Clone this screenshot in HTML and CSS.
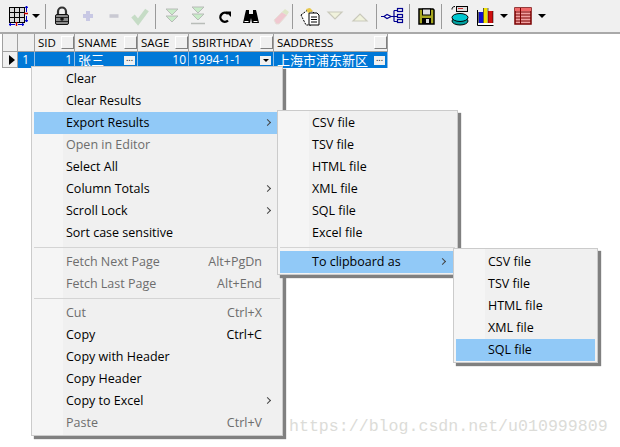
FILE: index.html
```html
<!DOCTYPE html>
<html lang="zh">
<head>
<meta charset="utf-8">
<title>Results grid</title>
<link rel="stylesheet" href="styles.css">
</head>
<body>
<div class="toolbar">
  <svg class="ic gridicon" viewBox="0 0 20 20"><g fill="#d8d8d8" stroke="#000" stroke-width="1"><rect x="1.500" y="1.500" width="5" height="5"/><rect x="6.500" y="1.500" width="5" height="5"/><rect x="11.500" y="1.500" width="5" height="5"/><rect x="1.500" y="6.500" width="5" height="5"/><rect x="6.500" y="6.500" width="5" height="5"/><rect x="11.500" y="6.500" width="5" height="5"/><rect x="1.500" y="11.500" width="5" height="5"/><rect x="6.500" y="11.500" width="5" height="5"/><rect x="11.500" y="11.500" width="5" height="5"/></g><path d="M18.500 0v6M18.500 10v6M17 2l1.500-2L20 2M17 14l1.500 2 1.500-2M1 18.500h6M10 18.500h6M3 17l-2 1.500L3 20M14 17l2 1.500L14 20" fill="none" stroke="#00c" stroke-width="1"/><path d="M16 7.500h4M8.500 16v4" stroke="#c00" stroke-width="1.400"/></svg>
  <i class="drop d1"></i>
  <i class="sep s1"></i>
  <svg class="ic lock" viewBox="0 0 18 22"><path d="M5 10V6.500a4 4 0 0 1 8 0V10" fill="none" stroke="#333" stroke-width="2.200"/><rect x="2.500" y="9.500" width="13" height="10" rx="1.500" fill="#8a8a8a" stroke="#111"/><path d="M3 12.500h12M3 16.500h12" stroke="#222"/><circle cx="9" cy="14" r="1.800" fill="#111"/></svg>
  <svg class="ic btn" viewBox="0 0 24 22"><path d="M12 6v10M7 11h10" stroke="#c8c8e4" stroke-width="4"/></svg>
  <svg class="ic btn" viewBox="0 0 24 22"><path d="M7.500 11h9" stroke="#c9c9d2" stroke-width="3.500"/></svg>
  <svg class="ic btn" viewBox="0 0 24 22"><path d="M5 11l5 6L19 5" fill="none" stroke="#c6dcc6" stroke-width="4.500"/></svg>
  <i class="sep s2"></i>
  <svg class="ic btn" viewBox="0 0 24 22"><path d="M6 4h12l-6 6zM6 11h12l-6 6z" fill="#c8ecc8" stroke="#b8bcb8"/></svg>
  <svg class="ic btn ddb" viewBox="0 0 24 22"><path d="M6 2h12l-6 6zM6 9h12l-6 6z" fill="#c8ecc8" stroke="#b8bcb8"/><path d="M5 18.500h14" stroke="#b8bcb8" stroke-width="1.500"/></svg>
  <svg class="ic btn" viewBox="0 0 24 22"><path d="M15 15.500a4.500 4.500 0 1 1 0-6.500" fill="none" stroke="#000" stroke-width="2.400"/><path d="M12.500 6.500h5.500v5.500z" fill="#000"/></svg>
  <svg class="ic btn" viewBox="0 0 24 22"><path d="M7 5h3v4h4V5h3l1 4 2 9h-7l-1-5h-0l-1 5H4l2-9z" fill="#000"/><path d="M5.500 16.500h4M14.500 16.500h4" stroke="#fff"/></svg>
  <svg class="ic btn eraser" viewBox="0 0 24 22"><path d="M6 15l8-8 5 3-8 9H8z" fill="#f0c8d0" stroke="#e6e0d8"/><path d="M14 7l3-3 4 3-2 3z" fill="#dfe6c8"/></svg>
  <i class="sep s3"></i>
  <svg class="ic btn doc" viewBox="0 0 24 22"><path d="M3 10l8-6 5 4-4 3 1 9H8z" fill="#fff" stroke="#000" stroke-dasharray="2 1"/><path d="M8 4l4-1 3 3-5 2z" fill="#e8c84a"/><path d="M11 8h8l2 2v10H11z" fill="#fff" stroke="#000"/><path d="M13 12h6M13 14.500h6M13 17h6" stroke="#000"/></svg>
  <svg class="ic btn tri1" viewBox="0 0 24 22"><path d="M5 7h14l-7 7z" fill="#f0f2dc" stroke="#c9c9bb" stroke-width="1.200"/></svg>
  <svg class="ic btn tri1" viewBox="0 0 24 22"><path d="M5 16h14l-7-7z" fill="#f0f2dc" stroke="#c9c9bb" stroke-width="1.200"/></svg>
  <i class="sep s4"></i>
  <svg class="ic btn tree" viewBox="0 0 24 22"><g fill="none" stroke="#000090" stroke-width="1.200"><path d="M1 11.500h6M11 11.500h3M14 5.500v11M14 5.500h3M14 11.500h3M14 16.500h3"/><path d="M7 9.500l-3 2 3 2 4-2z" fill="#fff"/><rect x="17.500" y="3.500" width="5" height="3"/><rect x="17.500" y="9.500" width="5" height="3"/><rect x="17.500" y="14.500" width="5" height="3"/></g></svg>
  <i class="sep s5"></i>
  <svg class="ic btn floppy" viewBox="0 0 24 22"><path d="M5 4h14l1 1v14H5z" fill="#a8a820" stroke="#000" stroke-width="1.500"/><rect x="8.500" y="4" width="8" height="6" fill="#ddd" stroke="#000"/><rect x="8" y="13" width="9" height="6" fill="#000"/><rect x="12" y="14" width="3" height="4" fill="#ddd"/></svg>
  <i class="sep s6"></i>
  <svg class="ic btn db" viewBox="0 0 24 22"><path d="M4 4.500c0-2 1-3 3-3" fill="none" stroke="#000"/><rect x="8.500" y="1.500" width="11" height="5" fill="#ddd" stroke="#000"/><rect x="10" y="3" width="5" height="1" fill="#c33"/><ellipse cx="12" cy="16" rx="8" ry="4" fill="#00a0a0" stroke="#000"/><ellipse cx="12" cy="12.500" rx="8" ry="4" fill="#00c8d0" stroke="#000"/></svg>
  <svg class="ic btn chart" viewBox="0 0 24 22"><rect x="4" y="7" width="17" height="13" fill="#fff"/><path d="M4.500 5v15.500h16" fill="none" stroke="#000"/><rect x="6" y="7" width="4" height="11" fill="#1010d0"/><rect x="10.500" y="3" width="4" height="15" fill="#f0e000"/><rect x="15" y="6" width="5" height="12" fill="#d01010"/><path d="M5.500 7v11M10.500 3v15M15 3v15M20 6v12" stroke="#000" stroke-width=".6"/></svg>
  <i class="drop d2"></i>
  <svg class="ic table" viewBox="0 0 18 18"><rect x="1" y="1" width="16" height="16" fill="#f0a0a0" stroke="#7a0000" stroke-width="1.500"/><path d="M1 1h16v3H1z" fill="#f06868"/><path d="M1 5h16M1 8h16M1 11h16M1 14h16M6.500 1v16" stroke="#7a0000" stroke-width="1"/></svg>
  <i class="drop d3"></i>
</div>

<div class="grid">
  <div class="hcell ind"></div><div class="hcell ind"></div>
  <div class="hcell"><span>SID</span><b class="hbtn"></b></div>
  <div class="hcell"><span>SNAME</span><b class="hbtn"></b></div>
  <div class="hcell"><span>SAGE</span><b class="hbtn"></b></div>
  <div class="hcell"><span>SBIRTHDAY</span><b class="hbtn"></b></div>
  <div class="hcell"><span>SADDRESS</span><b class="hbtn"></b></div>

  <div class="cell arrow"><i class="tri"></i></div>
  <div class="cell right num">1</div>
  <div class="cell right">1</div>
  <div class="cell"><span class="cjk">张三</span><b class="dots">...</b></div>
  <div class="cell right">10</div>
  <div class="cell"><span>1994-1-1</span><b class="dots pick"><i></i></b></div>
  <div class="cell"><span class="cjk">上海市浦东新区</span><b class="dots">...</b></div>
</div>

<div class="watermark">https://blog.csdn.net/u010999809</div>

<div class="menu m1">
  <div class="item">Clear</div>
  <div class="item">Clear Results</div>
  <div class="item on sub">Export Results</div>
  <div class="item off">Open in Editor</div>
  <div class="item">Select All</div>
  <div class="item sub">Column Totals</div>
  <div class="item sub">Scroll Lock</div>
  <div class="item">Sort case sensitive</div>
  <hr class="rule">
  <div class="item off">Fetch Next Page<kbd>Alt+PgDn</kbd></div>
  <div class="item off">Fetch Last Page<kbd>Alt+End</kbd></div>
  <hr class="rule">
  <div class="item off">Cut<kbd>Ctrl+X</kbd></div>
  <div class="item">Copy<kbd>Ctrl+C</kbd></div>
  <div class="item">Copy with Header</div>
  <div class="item">Copy Header</div>
  <div class="item sub">Copy to Excel</div>
  <div class="item off">Paste<kbd>Ctrl+V</kbd></div>
</div>

<div class="menu m2">
  <div class="item">CSV file</div>
  <div class="item">TSV file</div>
  <div class="item">HTML file</div>
  <div class="item">XML file</div>
  <div class="item">SQL file</div>
  <div class="item">Excel file</div>
  <hr class="rule">
  <div class="item on sub">To clipboard as</div>
</div>

<div class="menu m3">
  <div class="item">CSV file</div>
  <div class="item">TSV file</div>
  <div class="item">HTML file</div>
  <div class="item">XML file</div>
  <div class="item on">SQL file</div>
</div>
</body>
</html>
```
FILE: styles.css
```css
html, body {
  margin: 0;
  padding: 0;
  background: #fff;
  width: 620px;
  height: 447px;
  overflow: hidden;
  font-family: "Open Sans", "Noto Sans CJK SC", sans-serif;
}

/* toolbar */
.toolbar {
  display: flex;
  align-items: center;
  height: 34px;
  box-sizing: border-box;
  background: #f0f0f0;
  border-bottom: 2px solid #a9a9a9;
  padding: 0 0 0 8px;
}
.ic { display: block; flex: none; }
.gridicon { width: 20px; height: 20px; }
.btn { width: 24px; height: 22px; margin-right: 2px; }
.lock { width: 18px; height: 22px; margin: 0 5px 0 7px; }
.table { width: 18px; height: 18px; margin-left: 6px; }
.sep { display: block; flex: none; width: 1px; height: 25px; background: #9a9a9a; }
.drop {
  display: block;
  flex: none;
  width: 0;
  height: 0;
  border-left: 4px solid transparent;
  border-right: 4px solid transparent;
  border-top: 4px solid #000;
}
.d1 { margin-left: 4px; }
.d2 { margin-left: 1px; }
.d3 { margin-left: 6px; }
.s1 { margin-left: 5px; }
.s2 { margin: 0 4px 0 1px; }
.s3 { margin-left: -2px; }
.s4 { margin: 0 3px 0 2px; }
.s5 { margin: 0 4px 0 3px; }
.s6 { margin: 0 6px 0 1px; }
.ddb { margin-right: 3px; }
.eraser { margin-left: 3px; }
.doc { margin-left: 5px; }
.tri1 { margin-left: -1px; }
.chart { margin-left: -1px; }

/* grid */
.grid {
  display: grid;
  width: 386px;
  margin: 0 0 0 2px;
  border-left: 1px solid #a0a0a0;
  grid-template-columns: 15px 17px 40px 63px 51px 85px 114px;
  grid-template-rows: 18px 16px;
  font-size: 11.5px;
  color: #000;
}
.hcell {
  display: flex;
  align-items: center;
  justify-content: space-between;
  box-sizing: border-box;
  background: #f0f0f0;
  border-right: 1px solid #a0a0a0;
  border-bottom: 1px solid #a0a0a0;
  padding-left: 3px;
  line-height: 17px;
}
.hbtn {
  display: block;
  width: 13px;
  height: 13px;
  background: #f0f0f0;
  border-right: 1px solid #808080;
  border-bottom: 1px solid #808080;
  border-top: 1px solid #fff;
  border-left: 1px solid #fff;
  box-sizing: border-box;
}
.cell {
  display: flex;
  align-items: center;
  justify-content: space-between;
  box-sizing: border-box;
  background: #0078d7;
  color: #fff;
  border-right: 1px solid #8fbde6;
  padding: 0 2px 0 3px;
  font-size: 12px;
  line-height: 16px;
  overflow: hidden;
}
.cjk { font-size: 13px; }
.right { justify-content: flex-end; }
.arrow { background: #f0f0f0; padding: 0 0 0 6px; border-right: 1px solid #a0a0a0; border-bottom: 1px solid #a0a0a0; }
.num { padding-right: 5px; }
.tri {
  display: block;
  border-top: 5px solid transparent;
  border-bottom: 5px solid transparent;
  border-left: 6px solid #000;
}
.dots {
  display: flex;
  flex: none;
  justify-content: center;
  width: 11px;
  height: 9px;
  background: #f0f0f0;
  color: #000;
  font-size: 9px;
  font-weight: 400;
  line-height: 4px;
}
.pick { align-items: center; }
.pick i {
  display: block;
  border-left: 3px solid transparent;
  border-right: 3px solid transparent;
  border-top: 3px solid #000;
}

/* popup menus */
.menu {
  position: absolute;
  box-sizing: border-box;
  padding: 1px 2px;
  background: linear-gradient(90deg, #f5f5f5 31px, #f0f0f0 31px);
  border: 1px solid #cbcbcb;
  box-shadow: 3px 3px 1px #808080;
  font-size: 12.5px;
  color: #000;
}
.m1 { left: 31px; top: 66px; width: 252px; z-index: 1; }
.m2 { left: 277px; top: 110px; width: 181px; z-index: 2; }
.m3 { left: 453px; top: 248px; width: 145px; padding-top: 2px; z-index: 3; }
.item {
  position: relative;
  display: flex;
  justify-content: space-between;
  align-items: center;
  height: 22px;
  line-height: 22px;
  padding: 0 18px 0 32px;
  white-space: nowrap;
}
.on { background: #91c9f7; }
.off { color: #6d6d6d; }
kbd { font: inherit; }
.sub::after {
  content: "";
  position: absolute;
  right: 10px;
  top: 8px;
  width: 4px;
  height: 4px;
  border-top: 1px solid #444;
  border-right: 1px solid #444;
  transform: rotate(45deg);
}
.rule {
  height: 1px;
  margin: 3px 0;
  border: 0;
  background: #d4d4d4;
}

.watermark {
  position: absolute;
  left: 289px;
  top: 417px;
  font-family: "Liberation Mono", monospace;
  font-size: 16.6px;
  line-height: 20px;
  color: #dcdcd8;
  white-space: nowrap;
}
```
